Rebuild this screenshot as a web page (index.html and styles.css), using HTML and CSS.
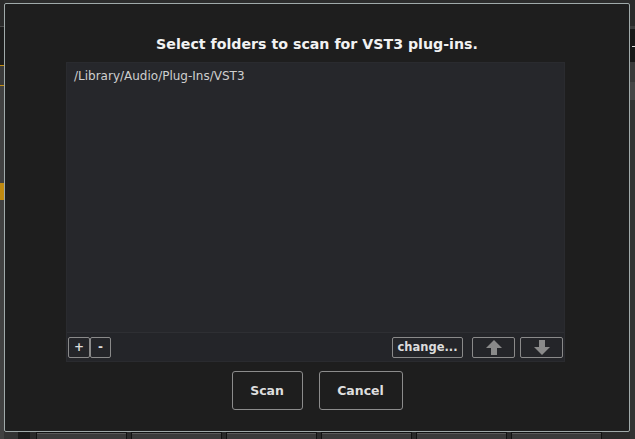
FILE: index.html
```html
<!DOCTYPE html>
<html>
<head>
<meta charset="utf-8">
<link rel="stylesheet" href="styles.css">
</head>
<body>
<div class="app">
  <div class="side-left">
    <div class="sl-top"></div>
    <div class="sl-line"></div>
    <div class="sl-dark"></div>
    <div class="sl-orange"></div>
    <div class="sl-row"></div>
    <div class="sl-orange"></div>
    <div class="sl-mid"></div>
    <div class="sl-block"></div>
    <div class="sl-rest"></div>
  </div>
  <div class="center">
    <div class="center-fill"></div>
    <div class="tabs">
      <div class="tab-gap a"></div>
      <div class="tab-gap b"></div>
      <div class="tab-gap c"></div>
      <div class="tab"></div>
      <div class="tab"></div>
      <div class="tab"></div>
      <div class="tab"></div>
      <div class="tab"></div>
      <div class="tab"></div>
    </div>
  </div>
  <div class="side-right">
    <div class="sr-top"></div>
    <div class="sr-line"></div>
    <div class="sr-dark"><span class="sr-tick"></span></div>
    <div class="sr-row"></div>
    <div class="sr-row2"></div>
    <div class="sr-rest"></div>
  </div>
</div>

<div class="dialog">
  <h1 class="title">Select folders to scan for VST3 plug-ins.</h1>
  <div class="panel">
    <div class="list">
      <div class="list-item">/Library/Audio/Plug-Ins/VST3</div>
    </div>
    <div class="toolbar">
      <div class="tool-left">
        <button class="tbtn sq">+</button>
        <button class="tbtn sq">-</button>
      </div>
      <div class="tool-right">
        <button class="tbtn change">change...</button>
        <div class="arrows">
          <button class="tbtn arrow">
            <svg width="16" height="15" viewBox="0 0 16 15"><path d="M8 0 L16 8 L11 8 L11 15 L5 15 L5 8 L0 8 Z" fill="#8a8a8a"/></svg>
          </button>
          <button class="tbtn arrow">
            <svg width="16" height="15" viewBox="0 0 16 15"><path d="M8 15 L16 7 L11 7 L11 0 L5 0 L5 7 L0 7 Z" fill="#8a8a8a"/></svg>
          </button>
        </div>
      </div>
    </div>
  </div>
  <div class="actions">
    <button class="btn scan">Scan</button>
    <button class="btn cancel">Cancel</button>
  </div>
</div>
</body>
</html>
```

FILE: styles.css
```css
* { box-sizing: border-box; }
html, body { margin: 0; padding: 0; }
body {
  width: 635px;
  height: 439px;
  overflow: hidden;
  background: #2c2c2c;
  font-family: "DejaVu Sans", "Open Sans", sans-serif;
  position: relative;
}

.app {
  display: flex;
  width: 635px;
  height: 439px;
}

.side-left {
  width: 4px;
  display: flex;
  flex-direction: column;
}
.sl-top { height: 26px; background: #2a2a2a; }
.sl-line { height: 1px; background: #4a4a4a; }
.sl-dark { height: 38px; background: #1d1d1d; }
.sl-orange { height: 1px; background: #c28c12; }
.sl-row { height: 19px; background: #3a3a3a; }
.sl-mid { height: 97px; background: #414141; }
.sl-block { height: 17px; background: #c08a10; }
.sl-rest { flex: 1; background: #414141; }

.center {
  flex: 1;
  display: flex;
  flex-direction: column;
}
.center-fill { flex: 1; background: #2c2c2c; }
.tabs {
  height: 7px;
  display: flex;
  gap: 4px;
  background: #2a2a2a;
}
.tab-gap.a { width: 14px; background: #333; margin-right: -4px; }
.tab-gap.b { width: 12px; background: #1a1a1a; margin-right: -4px; }
.tab-gap.c { width: 2px; background: #2a2a2a; }
.tab {
  width: 91px;
  background: #3a3a3a;
  border: 1px solid #111;
  border-bottom: none;
  box-shadow: inset 0 1px 0 #5a5a5a;
}

.side-right {
  width: 5px;
  display: flex;
  flex-direction: column;
}
.sr-top { height: 26px; background: #2a2a2a; }
.sr-line { height: 3px; background: #3c3c3c; }
.sr-dark { height: 33px; background: #181818; position: relative; }
.sr-tick { position: absolute; left: 2px; top: 17px; width: 3px; height: 1px; background: #ddd; }
.sr-row { height: 20px; background: #3a3a3a; }
.sr-row2 { height: 18px; background: #464646; }
.sr-rest { flex: 1; background: #333; }

.dialog {
  position: absolute;
  left: 4px;
  top: 3px;
  width: 626px;
  height: 429px;
  background: #1e1e1e;
  border: 1px solid #a0aaaa;
  border-radius: 2px;
  display: flex;
  flex-direction: column;
  align-items: center;
}

.title {
  margin: 0;
  height: 58px;
  padding-top: 31px;
  font-size: 14.2px;
  line-height: 18px;
  font-weight: 700;
  color: #f2f2f2;
  text-align: center;
  letter-spacing: 0;
}

.panel {
  width: 499px;
  height: 300px;
  margin-left: -3px;
  background: #242529;
  border: 1px solid #2a2b2f;
  display: flex;
  flex-direction: column;
}
.list {
  flex: 1;
  background: #26272b;
  border-bottom: 1px solid #2e2f33;
  padding: 5px 7px;
}
.list-item {
  font-size: 12px;
  line-height: 16px;
  color: #cfcfcf;
}

.toolbar {
  height: 28px;
  display: flex;
  justify-content: space-between;
  align-items: center;
  padding: 0 1px;
}
.tool-left { display: flex; }
.tool-right { display: flex; gap: 9px; align-items: center; }
.arrows { display: flex; gap: 5px; }

.tbtn {
  height: 21px;
  margin: 0;
  padding: 0;
  background: transparent;
  border: 1px solid #8a8a8a;
  border-radius: 2px;
  color: #dcdcdc;
  font-family: "DejaVu Sans", "Open Sans", sans-serif;
  font-weight: 700;
  font-size: 12px;
  line-height: 19px;
  display: flex;
  align-items: center;
  justify-content: center;
}
.tbtn.sq { width: 22px; }
.tbtn.sq + .tbtn.sq { width: 21px; }
.tbtn.change { width: 71px; font-size: 11.5px; }
.tbtn.arrow { width: 43px; }

.actions {
  margin-top: 9px;
  display: flex;
  gap: 16px;
}
.btn {
  height: 39px;
  margin: 0;
  padding: 0;
  background: transparent;
  border: 1px solid #8c8c8c;
  border-radius: 3px;
  color: #dedede;
  font-family: "DejaVu Sans", "Open Sans", sans-serif;
  font-weight: 700;
  font-size: 12.5px;
}
.btn.scan { width: 71px; }
.btn.cancel { width: 84px; }
```
